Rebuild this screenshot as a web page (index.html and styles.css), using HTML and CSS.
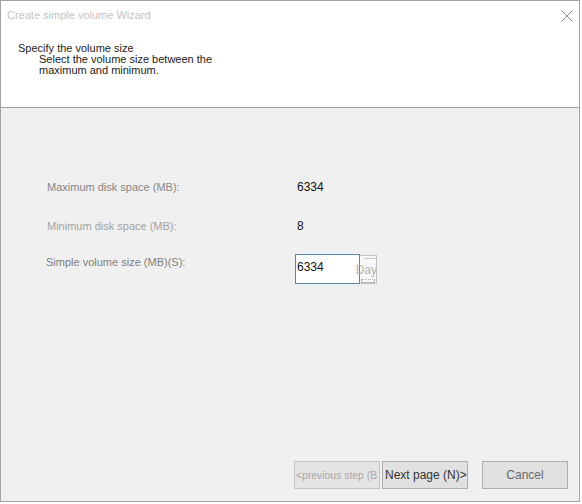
FILE: index.html
```html
<!DOCTYPE html>
<html>
<head>
<meta charset="utf-8">
<link rel="stylesheet" href="styles.css">
</head>
<body>
<div class="window">
  <div class="header">
    <div class="titlebar">
      <span class="title">Create simple volume Wizard</span>
      <svg class="close" width="12" height="12" viewBox="0 0 12 12"><path d="M0.5 0.5 L11.5 11.5 M11.5 0.5 L0.5 11.5" stroke="#8a8a8a" stroke-width="1" fill="none"/></svg>
    </div>
    <div class="heading">Specify the volume size</div>
    <div class="desc">Select the volume size between the<br>maximum and minimum.</div>
  </div>
  <div class="content">
    <div class="row row1">
      <span class="label label-max">Maximum disk space (MB):</span>
      <span class="value">6334</span>
    </div>
    <div class="row row2">
      <span class="label label-min">Minimum disk space (MB):</span>
      <span class="value">8</span>
    </div>
    <div class="row row3">
      <span class="label label-size">Simple volume size (MB)(S):</span>
      <div class="spin">
        <div class="field">6334</div>
        <div class="spinner">
          <span class="spin-top"></span>
          <span class="spin-text">Day</span>
          <span class="spin-bottom"></span>
        </div>
      </div>
    </div>
    <div class="footer">
      <button class="btn btn-prev">&lt;previous step (B</button>
      <button class="btn btn-next">Next page (N)&gt;</button>
      <button class="btn btn-cancel">Cancel</button>
    </div>
  </div>
</div>
</body>
</html>
```
FILE: styles.css
```css
html, body {
  margin: 0;
  padding: 0;
  background: #ffffff;
}
body {
  font-family: "Liberation Sans", Arial, sans-serif;
  font-size: 11px;
}
.window {
  width: 578px;
  height: 500px;
  border: 1px solid #a3a3a3;
  display: flex;
  flex-direction: column;
  background: #f0f0f0;
}
.header {
  background: #ffffff;
  height: 106px;
  border-bottom: 1px solid #a0a0a0;
  box-sizing: content-box;
}
.titlebar {
  height: 28px;
  display: flex;
  align-items: center;
  justify-content: space-between;
  padding: 0 6px 0 6px;
}
.title {
  color: #c4c4c4;
  font-size: 11px;
}
.close {
  margin-top: 2px;
}
.heading {
  margin-top: 13px;
  padding-left: 17px;
  line-height: 12px;
  color: #1e1e1e;
}
.desc {
  padding-left: 38px;
  line-height: 11px;
  margin-top: 0;
  color: #222222;
}
.content {
  flex: 1;
  display: flex;
  flex-direction: column;
  padding-top: 71px;
}
.row {
  display: flex;
  align-items: flex-start;
  padding-left: 46px;
  line-height: 16px;
}
.row2 { margin-top: 23px; }
.row3 { margin-top: 20px; padding-left: 45px; }
.label {
  width: 250px;
  flex: none;
}
.row3 .label { width: 249px; }
.label-max { color: #858585; }
.label-min { color: #a2a2a2; }
.label-size { color: #7e7e7e; }
.value {
  color: #111111;
  font-size: 12px;
}
.spin {
  display: flex;
}
.field {
  width: 62px;
  height: 28px;
  border: 1px solid #5588b0;
  background: #ffffff;
  color: #111111;
  font-size: 12px;
  line-height: 24px;
  padding-left: 1px;
  box-sizing: content-box;
}
.spinner {
  width: 16px;
  height: 27px;
  margin-top: 1px;
  border: 1px solid #c2c2c2;
  border-left: none;
  background: #f7f7f7;
  display: flex;
  flex-direction: column;
  align-items: flex-end;
}
.spin-top {
  width: 12px;
  height: 3px;
  margin-top: 2px;
  border-top: 1px solid #c8c8c8;
}
.spin-text {
  color: #b4b4b4;
  font-size: 12px;
  line-height: 14px;
  margin-top: 2px;
  margin-right: -1px;
  white-space: nowrap;
}
.spin-bottom {
  width: 12px;
  height: 2px;
  margin-top: 2px;
  border: 1px solid #b0b0b0;
  border-top: 1px dotted #b0b0b0;
  margin-right: 1px;
}
.footer {
  margin-top: auto;
  display: flex;
  justify-content: flex-end;
  padding: 0 11px 12px 0;
}
.btn {
  width: 86px;
  height: 28px;
  box-sizing: border-box;
  border: 1px solid #adadad;
  background: #e1e1e1;
  font-family: "Liberation Sans", Arial, sans-serif;
  font-size: 12px;
  padding: 0 2px;
  overflow: hidden;
  white-space: nowrap;
  text-align: left;
}
.btn-prev {
  border-color: #c4c4c4;
  background: #e4e4e4;
  color: #a8a8a8;
  font-size: 10.4px;
  padding-left: 1px;
}
.btn-next {
  margin-left: 2px;
  color: #333333;
}
.btn-cancel {
  margin-left: 14px;
  text-align: center;
  color: #6a6a6a;
}
```
